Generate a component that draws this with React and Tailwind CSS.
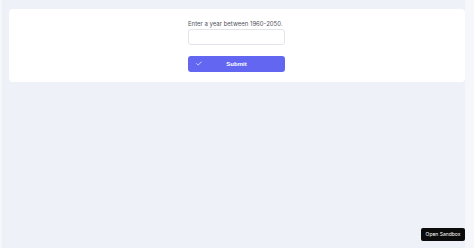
import React from "react";

export default function App() {
  return (
    <div className="w-[474px] h-[248px] bg-[#f5f7fa] flex relative overflow-hidden" style={{ fontFamily: "Inter, 'Liberation Sans', sans-serif" }}>
      <div className="ml-[2px] w-[463px] h-full bg-[#eef1f7] pt-[9px] pl-[7px]">
        <div className="w-[456px] h-[73px] bg-white rounded-[4px] flex flex-col items-center pt-[11px] pr-[1px]">
          <div className="w-[97px] flex flex-col">
            <label className="text-[6px] leading-[8px] text-[#52525b]">Enter a year between 1960-2050.</label>
            <input className="mt-[1px] w-[97px] h-[16px] border border-[#e2e4e9] rounded-[3px] bg-white outline-none" />
            <button className="mt-[11px] w-[97px] h-[16px] bg-[#6366f1] rounded-[3px] flex items-center relative">
              <svg className="absolute left-[8px] top-[5px]" width="6" height="5" viewBox="0 0 6 5" fill="none">
                <path d="M0.6 2.6 L2.2 4.1 L5.4 0.8" stroke="#e0e7ff" strokeWidth="0.8" strokeLinecap="round" strokeLinejoin="round" />
              </svg>
              <span className="w-full text-center text-[6px] font-bold text-white" style={{ fontFamily: "'Liberation Sans', Arial, sans-serif" }}>Submit</span>
            </button>
          </div>
        </div>
      </div>
      <div className="absolute left-[421px] top-[228px] w-[44px] h-[13px] bg-[#0b0b0b] rounded-[2px] flex items-center justify-center">
        <span className="text-[5px] text-white leading-none">Open Sandbox</span>
      </div>
    </div>
  );
}
